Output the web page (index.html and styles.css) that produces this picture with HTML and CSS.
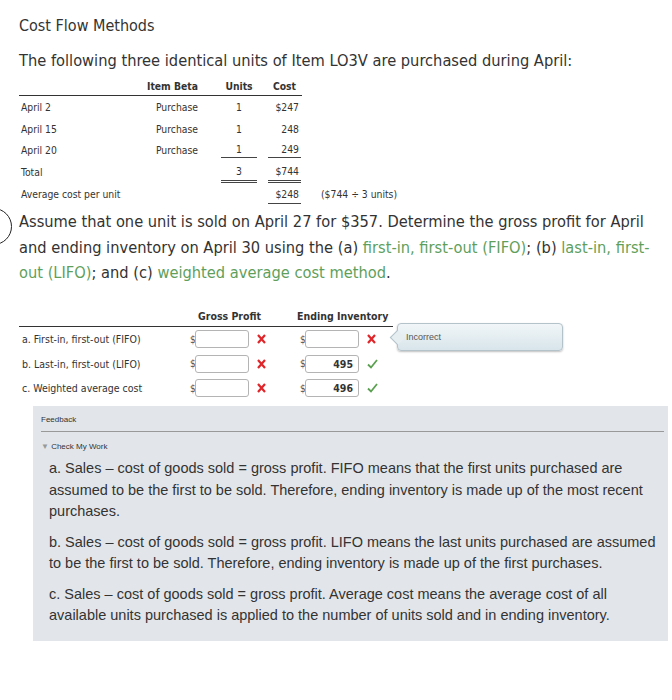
FILE: index.html
```html
<!DOCTYPE html>
<html lang="en">
<head>
<meta charset="utf-8">
<title>Cost Flow Methods</title>
<link rel="stylesheet" href="styles.css">
</head>
<body>
<div class="page">
  <h1 class="title">Cost Flow Methods</h1>
  <p class="intro">The following three identical units of Item LO3V are purchased during April:</p>

  <div class="ptable">
    <div class="prow phead"><span></span><span class="r">Item Beta</span><span class="u">Units</span><span class="c ctr">Cost</span></div>
    <div class="prow"><span class="lbl">April 2</span><span class="r">Purchase</span><span class="u">1</span><span class="c">$247</span></div>
    <div class="prow"><span class="lbl">April 15</span><span class="r">Purchase</span><span class="u">1</span><span class="c">248</span></div>
    <div class="prow"><span class="lbl">April 20</span><span class="r">Purchase</span><span class="u line">1</span><span class="c line">249</span></div>
    <div class="prow"><span class="lbl">Total</span><span></span><span class="u dbl">3</span><span class="c dbl">$744</span></div>
    <div class="prow"><span class="lbl">Average cost per unit</span><span></span><span></span><span class="c line2">$248</span><span class="note">($744 ÷ 3 units)</span></div>
  </div>

  <div class="question">
    <span class="qcircle"></span>
    <p>Assume that one unit is sold on April 27 for $357. Determine the gross profit for April and ending inventory on April 30 using the (a) <span class="term">first-in, first-out (FIFO)</span>; (b) <span class="term">last-in, first-out (LIFO)</span>; and (c) <span class="term">weighted average cost method</span>.</p>
  </div>

  <div class="answers">
    <div class="arow ahead"><span></span><span class="h1">Gross Profit</span><span class="h2">Ending Inventory</span></div>
    <div class="arow">
      <span class="albl">a. First-in, first-out (FIFO)</span>
      <span class="cell"><span class="cur">$</span><span class="box"></span><svg class="mark" width="9" height="10" viewBox="0 0 9 10"><path d="M1 1 L8 9 M8 1 L1 9" stroke="#e0262b" stroke-width="2.2" fill="none"/></svg></span>
      <span class="cell"><span class="cur">$</span><span class="box"></span><svg class="mark" width="9" height="10" viewBox="0 0 9 10"><path d="M1 1 L8 9 M8 1 L1 9" stroke="#e0262b" stroke-width="2.2" fill="none"/></svg></span>
    </div>
    <div class="arow">
      <span class="albl">b. Last-in, first-out (LIFO)</span>
      <span class="cell"><span class="cur">$</span><span class="box"></span><svg class="mark" width="9" height="10" viewBox="0 0 9 10"><path d="M1 1 L8 9 M8 1 L1 9" stroke="#e0262b" stroke-width="2.2" fill="none"/></svg></span>
      <span class="cell"><span class="cur">$</span><span class="box">495</span><svg class="mark" width="11" height="10" viewBox="0 0 11 10"><path d="M1 5.5 L4 8.5 L10 1" stroke="#5aa050" stroke-width="1.8" fill="none"/></svg></span>
    </div>
    <div class="arow">
      <span class="albl">c. Weighted average cost</span>
      <span class="cell"><span class="cur">$</span><span class="box"></span><svg class="mark" width="9" height="10" viewBox="0 0 9 10"><path d="M1 1 L8 9 M8 1 L1 9" stroke="#e0262b" stroke-width="2.2" fill="none"/></svg></span>
      <span class="cell"><span class="cur">$</span><span class="box">496</span><svg class="mark" width="11" height="10" viewBox="0 0 11 10"><path d="M1 5.5 L4 8.5 L10 1" stroke="#5aa050" stroke-width="1.8" fill="none"/></svg></span>
    </div>
    <div class="tooltip">Incorrect</div>
  </div>

  <div class="feedback">
    <div class="fb-title">Feedback</div>
    <div class="fb-check"><span class="tri">▼</span> Check My Work</div>
    <p>a. Sales – cost of goods sold = gross profit. FIFO means that the first units purchased are assumed to be the first to be sold. Therefore, ending inventory is made up of the most recent purchases.</p>
    <p>b. Sales – cost of goods sold = gross profit. LIFO means the last units purchased are assumed to be the first to be sold. Therefore, ending inventory is made up of the first purchases.</p>
    <p>c. Sales – cost of goods sold = gross profit. Average cost means the average cost of all available units purchased is applied to the number of units sold and in ending inventory.</p>
  </div>
</div>
</body>
</html>
```

FILE: styles.css
```css
* { box-sizing: border-box; }
body {
  margin: 0;
  background: #fff;
  color: #333;
  font-family: "DejaVu Sans Condensed", "DejaVu Sans", sans-serif;
  font-stretch: condensed;
}
.page {
  position: relative;
  padding: 0 8px 0 19px;
}
.title {
  margin: 0;
  padding-top: 16px;
  font-size: 16px;
  font-weight: normal;
  line-height: 19px;
}
.intro {
  margin: 16px 0 0;
  font-size: 16.3px;
  line-height: 19px;
}

/* purchases table */
.ptable {
  margin-top: 9px;
  font-size: 10.3px;
  color: #333;
}
.prow {
  display: grid;
  grid-template-columns: 121px 58px 59px 44px auto;
  height: 21.7px;
  line-height: 22px;
  align-items: start;
}
.phead {
  width: 283px;
  height: 17px;
  line-height: 14px;
  font-weight: bold;
  border-bottom: 1px solid #333;
}
.lbl { padding-left: 2px; }
.r { text-align: right; }
.u { margin-left: 23px; text-align: center; }
.c { margin-left: 11px; text-align: right; padding-right: 2px; }
.c.ctr { text-align: center; padding-right: 0; }
.line { height: 19px; line-height: 21px; border-bottom: 1px solid #444; }
.line2 { height: 21px; border-bottom: 1px solid #444; }
.dbl { height: 22px; line-height: 20px; border-bottom: 3px double #444; }
.note { margin-left: 20px; }

/* question */
.question {
  position: relative;
  margin-top: 5px;
}
.question p {
  margin: 0;
  font-size: 16.3px;
  line-height: 25.5px;
}
.term { color: #5f9f5c; }
.qcircle {
  position: absolute;
  left: -44px;
  top: -1px;
  width: 37px;
  height: 37px;
  border: 1.5px solid #222;
  border-radius: 50%;
}

/* answers */
.answers {
  position: relative;
  margin-top: 23px;
  font-size: 10.5px;
}
.arow {
  display: grid;
  grid-template-columns: 153px 110px 111px;
  width: 374px;
  height: 24.5px;
  align-items: center;
}
.ahead {
  height: 18px;
  font-weight: bold;
  border-bottom: 1px solid #333;
  align-items: start;
  line-height: 14px;
}
.h1 { padding-left: 26px; }
.h2 { padding-left: 15px; }
.albl { padding-left: 3px; }
.cell {
  display: flex;
  align-items: center;
  padding-left: 18px;
}
.cur { width: 5px; font-size: 10px; color: #555; }
.box {
  width: 54px;
  height: 18px;
  border: 1px solid #b4b4b4;
  border-radius: 3px;
  background: #fff;
  font-weight: bold;
  text-align: right;
  padding-right: 5px;
  line-height: 16px;
}
.mark { margin-left: 8px; }
.tooltip {
  position: absolute;
  left: 378px;
  top: 14px;
  width: 166px;
  height: 28px;
  padding-left: 8px;
  line-height: 27px;
  font-family: "Liberation Sans", Arial, sans-serif;
  font-size: 9px;
  color: #555;
  background: linear-gradient(#f1f6f8, #d8e5eb);
  border: 1px solid #b4c2c9;
  border-radius: 4px;
  box-shadow: 0 1px 2px rgba(0,0,0,0.25);
}
.tooltip::before {
  content: "";
  position: absolute;
  left: -6px;
  top: 8px;
  width: 10px;
  height: 10px;
  background: #e6eef2;
  border-left: 1px solid #b4c2c9;
  border-bottom: 1px solid #b4c2c9;
  transform: rotate(45deg);
}

/* feedback */
.feedback {
  margin: 6px -4px 0 14px;
  padding: 9px 4px 14px 8px;
  background: #e2e6ea;
  font-family: "Liberation Sans", Arial, sans-serif;
  color: #333;
}
.fb-title {
  font-size: 8px;
  line-height: 10px;
  padding-bottom: 6px;
  border-bottom: 1px solid #999;
}
.fb-check {
  margin-top: 10px;
  font-size: 8px;
  line-height: 10px;
}
.tri { color: #999; font-size: 8px; }
.feedback p {
  margin: 6px 0 0 8px;
  font-size: 14.5px;
  line-height: 21.5px;
}
.feedback p + p { margin-top: 9px; }
```
